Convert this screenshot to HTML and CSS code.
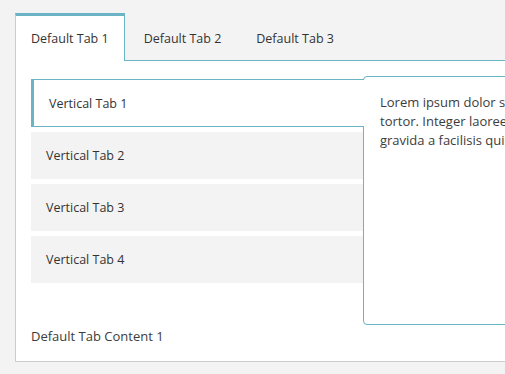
FILE: index.html
```html
<!DOCTYPE html>
<html>
<head>
	<title>Nested Tabs</title>
	<link rel="stylesheet" href="styles.css">
</head>
<body>
	<div class="tabs">
		<ul class="tab-nav">
			<li class="active">Default Tab 1</li>
			<li>Default Tab 2</li>
			<li>Default Tab 3</li>
		</ul>
		<div class="tab-panel">
			<div class="vtabs">
				<ul class="vtab-nav">
					<li class="active">Vertical Tab 1</li>
					<li>Vertical Tab 2</li>
					<li>Vertical Tab 3</li>
					<li>Vertical Tab 4</li>
				</ul>
				<div class="vtab-content">
					<p>Lorem ipsum dolor sit amet, consectetur adipiscing elit. Nulla nec<br>
					tortor. Integer laoreet magna eget sapien blandit, et tincidunt mi<br>
					gravida a facilisis quis, dictum sed purus.</p>
				</div>
			</div>
			<p class="panel-text">Default Tab Content 1</p>
		</div>
	</div>
</body>
</html>
```

FILE: styles.css
```css
html, body {
	overflow: hidden;
}

body {
	margin: 0;
	background: #f3f3f3;
	font-family: "Open Sans", sans-serif;
	font-size: 13px;
	line-height: 19px;
	color: #3c3c3c;
}

.tabs {
	margin: 13px 0 0 15px;
	width: 720px;
}

.tab-nav {
	display: flex;
	gap: 3px;
	list-style: none;
	margin: 0 0 -1px;
	padding: 0;
}

.tab-nav li {
	position: relative;
	z-index: 1;
	padding: 13px 15px;
	border: 1px solid transparent;
	border-top: 3px solid transparent;
	border-bottom: 0;
	font-size: 12.5px;
	color: #333;
}

.tab-nav li.active {
	background: #fff;
	border-left-color: #ccc;
	border-right-color: #6ab4c5;
	border-top-color: #6ab4c5;
}

.tab-panel {
	background: #fff;
	border: 1px solid #ccc;
	border-top-color: #6ab4c5;
	padding: 15px;
}

.vtabs {
	display: flex;
}

.vtab-nav {
	flex-shrink: 0;
	width: 332px;
	list-style: none;
	margin: 3px 0 0;
	padding: 0;
}

.vtab-nav li {
	display: flex;
	align-items: center;
	box-sizing: border-box;
	height: 47px;
	padding: 0 15px;
	margin-bottom: 5px;
	background: #f3f3f3;
	font-size: 12.5px;
	color: #333;
}

.vtab-nav li.active {
	position: relative;
	z-index: 1;
	height: 48px;
	background: #fff;
	border: 1px solid #6ab4c5;
	border-left-width: 3px;
	border-right: 0;
	margin-right: -1px;
}

.vtab-content {
	flex: 1;
	box-sizing: border-box;
	min-height: 249px;
	padding: 16px;
	background: #fff;
	border: 1px solid #6ab4c5;
	border-radius: 4px;
}

.vtab-content p {
	margin: 0;
	white-space: nowrap;
}

.panel-text {
	margin: 2px 0 0;
}
```
